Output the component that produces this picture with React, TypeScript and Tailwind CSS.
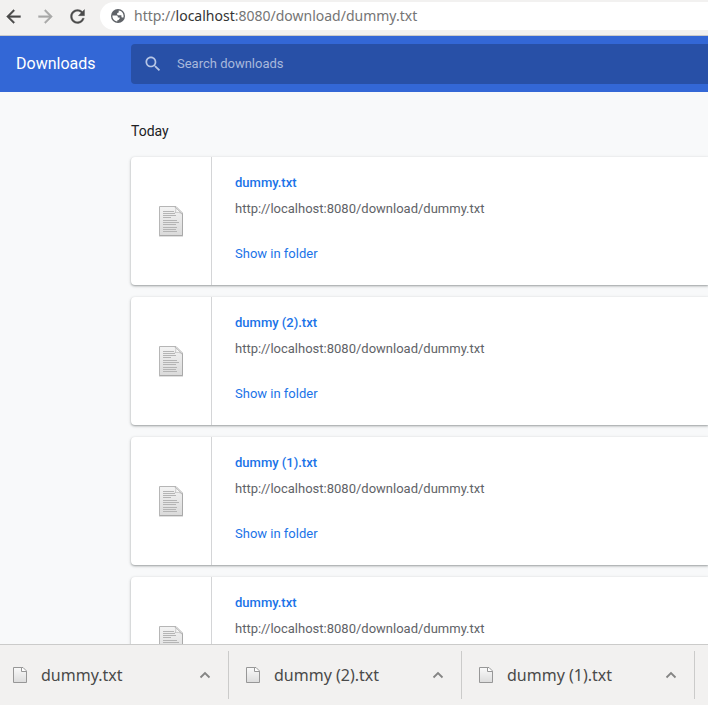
import React from "react";

type Download = { id: number; name: string; onDisk: boolean };

const SOURCE_URL = "http://localhost:8080/download/dummy.txt";

const downloads: Download[] = [
  { id: 4, name: "dummy.txt", onDisk: true },
  { id: 3, name: "dummy (2).txt", onDisk: true },
  { id: 2, name: "dummy (1).txt", onDisk: true },
  { id: 1, name: "dummy.txt", onDisk: false },
];

function NavIcon({ d }: { d: string }) {
  return (
    <svg viewBox="0 0 24 24" className="size-[21px]" fill="currentColor" stroke="currentColor" strokeWidth=".4" aria-hidden="true">
      <path d={d} />
    </svg>
  );
}

function Toolbar() {
  return (
    <div className="flex h-9 shrink-0 items-start border-b border-[#cbcbca] bg-[#f2f1f0] pt-0.5">
      <div className="flex h-7 w-[100px] shrink-0 items-center gap-[11px] pl-[3px]">
        <button type="button" aria-label="Back" className="text-[#4a4a4a]">
          <NavIcon d="M20 11H7.83l5.59-5.59L12 4l-8 8 8 8 1.41-1.41L7.83 13H20v-2z" />
        </button>
        <button type="button" aria-label="Forward" disabled className="text-[#a9a9a8]">
          <NavIcon d="M12 4l-1.41 1.41L16.17 11H4v2h12.17l-5.58 5.59L12 20l8-8z" />
        </button>
        <button type="button" aria-label="Reload" className="text-[#4a4a4a]">
          <NavIcon d="M17.65 6.35C16.2 4.9 14.21 4 12 4c-4.42 0-7.99 3.58-7.99 8s3.57 8 7.99 8c3.73 0 6.84-2.55 7.73-6h-2.08c-.82 2.33-3.04 4-5.65 4-3.31 0-6-2.69-6-6s2.69-6 6-6c1.66 0 3.14.69 4.22 1.78L13 11h7V4l-2.35 2.35z" />
        </button>
      </div>
      <div className="flex h-7 min-w-0 flex-1 items-center gap-2 overflow-hidden rounded-l-full bg-white pl-[10px] font-['Noto_Sans',sans-serif] text-sm text-[#757575]">
        <svg viewBox="0 0 16 16" className="size-4 shrink-0" aria-hidden="true">
          <circle cx="8" cy="8" r="7" fill="#5f6368" />
          <path d="M2.400 7.600H6.300c.9 0 1.500.5 1.500 1.300v.6h1.300c.6 0 .8.400.6.9l-.9 1.300c-.4.400-1 .5-1.500.5v1.300C4.300 13.200 2.300 10.800 2.400 7.600z" fill="#fff" />
          <path d="M8.700 2.500c2.800.3 4.900 2.600 4.900 5.500 0 .5-.1 1-.2 1.400h-1.100c-.6 0-.9-.5-.9-1V7.200H8.600c-.8 0-1.500-.5-1.500-1.300s.6-1.200 1.600-1.300z" fill="#fff" />
        </svg>
        <span className="whitespace-nowrap">
          http://<span className="text-[#333333]">localhost</span>:8080/download/dummy.txt
        </span>
      </div>
    </div>
  );
}

function Header() {
  return (
    <header className="flex h-14 shrink-0 items-center bg-[#3367d6]">
      <h1 className="w-[131px] shrink-0 pl-4 text-base text-white">Downloads</h1>
      <label className="flex h-10 min-w-0 flex-1 items-center gap-[14px] rounded-l-sm bg-[#2850a7] pl-3">
        <svg viewBox="0 0 24 24" className="size-5 shrink-0" fill="#b7c6e6" aria-hidden="true">
          <path d="M15.5 14h-.79l-.28-.27C15.41 12.59 16 11.11 16 9.5 16 5.91 13.09 3 9.5 3S3 5.91 3 9.5 5.91 16 9.5 16c1.61 0 3.09-.59 4.23-1.57l.27.28v.79l5 4.99L20.49 19l-4.99-5zm-6 0C7.01 14 5 11.99 5 9.5S7.01 5 9.5 5 14 7.01 14 9.5 11.99 14 9.5 14z" />
        </svg>
        <input
          type="text"
          aria-label="Search downloads"
          placeholder="Search downloads"
          className="min-w-0 flex-1 bg-transparent text-[13px] text-white outline-none placeholder:text-[#a9b9dc]"
        />
      </label>
    </header>
  );
}

function TextFileIcon() {
  return (
    <svg viewBox="0 0 26 32" className="h-8 w-[26px]" aria-hidden="true">
      <defs>
        <linearGradient id="sheet" x1="0" y1="0" x2="0" y2="1">
          <stop offset="0" stopColor="#f3f3f3" />
          <stop offset="1" stopColor="#dadada" />
        </linearGradient>
      </defs>
      <path d="M1 31.5h24" stroke="#000" strokeOpacity=".12" />
      <path d="M1.5 1.5H18l6.500 6.500v22.500h-23z" fill="url(#sheet)" stroke="#b6b6b6" />
      <path d="M1.500 30.500h23V9" fill="none" stroke="#a9a9a9" />
      <path d="M17 2c1.500 2 1 4 0 5.500 2.500-.5 5-.2 7 1.500z" fill="#fafafa" stroke="#b8b8b8" strokeWidth=".8" />
      <path
        d="M5 6.500h11M5 8.500h12M5 10.500h13M5 12.500h8M5 15.500h14M5 17.500h16M5 19.500h13M5 22.500h14M5 24.500h13M5 26.500h14"
        stroke="#b4b4b4"
      />
    </svg>
  );
}

function DownloadCard({ name, onDisk }: { name: string; onDisk: boolean }) {
  return (
    <li className="flex h-32 rounded-l bg-white shadow-[0_1px_2px_0_rgba(60,64,67,0.4),0_1px_3px_1px_rgba(60,64,67,0.1)]">
      <div className="flex w-[81px] shrink-0 items-center justify-center border-r border-[#d4d5d7]">
        <TextFileIcon />
      </div>
      <div className="flex min-w-0 flex-1 flex-col items-start pt-4 pl-[23px] text-[13px] leading-5 whitespace-nowrap">
        <a href="#file" className="font-medium text-[#1a73e8]">{name}</a>
        <a href="#source" className="mt-1.5 text-[#5f6368]">{SOURCE_URL}</a>
        {onDisk && (
          <button type="button" className="mt-[25px] text-[#1a73e8]">Show in folder</button>
        )}
      </div>
    </li>
  );
}

function ShelfItem({ name }: { name: string }) {
  return (
    <li className="flex h-12 w-[233px] shrink-0 items-center border-r border-[#cbcbca] pr-4 pl-4 first:w-[229px] first:pl-3">
      <button type="button" className="flex min-w-0 flex-1 items-center gap-[13px]">
        <svg viewBox="0 0 16 18" className="h-[18px] w-4 shrink-0" aria-hidden="true">
          <defs>
            <linearGradient id="page" x1="0" y1="0" x2="0" y2="1">
              <stop offset="0" stopColor="#fafafa" />
              <stop offset="1" stopColor="#dcdcdc" />
            </linearGradient>
          </defs>
          <path d="M1.500 1.500H11l3.500 3.500v11.500h-13z" fill="url(#page)" stroke="#979797" />
          <path d="M9.500 1.500v4h5" fill="#fff" stroke="#979797" />
        </svg>
        <span className="font-['Noto_Sans',sans-serif] text-base text-[#4a4a4a]">{name}</span>
      </button>
      <button type="button" aria-label={"Options for " + name} className="text-[#858584]">
        <svg viewBox="0 0 14 14" className="size-[14px]" fill="none" stroke="currentColor" strokeWidth="1.8" aria-hidden="true">
          <path d="M2.500 9.500L7 5l4.500 4.500" />
        </svg>
      </button>
    </li>
  );
}

export default function App() {
  return (
    <div className="flex h-screen flex-col overflow-hidden bg-[#f8f9fa] font-[Roboto,sans-serif]">
      <Toolbar />
      <Header />
      <main className="min-h-0 flex-1 overflow-hidden pl-[131px]">
        <h2 className="pt-[29px] text-sm leading-5 text-[#202124]">Today</h2>
        <ul className="mt-4 flex flex-col gap-3">
          {downloads.map((item) => (
            <DownloadCard key={item.id} name={item.name} onDisk={item.onDisk} />
          ))}
        </ul>
      </main>
      <footer className="h-[61px] shrink-0 overflow-hidden border-t border-[#cbcbca] bg-[#f2f1f0]">
        <ul className="flex pt-1.5">
          {downloads.slice(0, 3).map((item) => (
            <ShelfItem key={item.id} name={item.name} />
          ))}
        </ul>
      </footer>
    </div>
  );
}
